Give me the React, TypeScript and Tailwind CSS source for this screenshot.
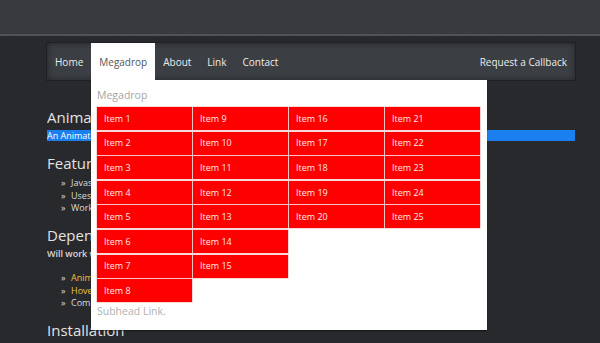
import React from "react";

const font = { fontFamily: '"Open Sans", "Noto Sans", sans-serif' };

const columns: string[][] = [
  ["Item 1", "Item 2", "Item 3", "Item 4", "Item 5", "Item 6", "Item 7", "Item 8"],
  ["Item 9", "Item 10", "Item 11", "Item 12", "Item 13", "Item 14", "Item 15"],
  ["Item 16", "Item 17", "Item 18", "Item 19", "Item 20"],
  ["Item 21", "Item 22", "Item 23", "Item 24", "Item 25"],
];

function Bullet({ text, yellow }: { text: string; yellow?: boolean }) {
  return (
    <div className="flex h-[12.5px] w-[44px] items-center overflow-hidden whitespace-nowrap pl-[14px] text-[9px] leading-[12.5px]">
      <span className="w-[10px] shrink-0 text-[#dcdcdc]">»</span>
      <span className={yellow ? "text-[#e9c23f]" : "text-[#dcdcdc]"}>{text}</span>
    </div>
  );
}

function Heading({ text, wide }: { text: string; wide?: boolean }) {
  return (
    <div
      className={
        (wide ? "w-[90px] " : "w-[44px] ") +
        "h-[20px] overflow-hidden whitespace-nowrap text-[15px] leading-[20px]"
      }
    >
      {text}
    </div>
  );
}

export default function App() {
  return (
    <div style={font} className="h-[343px] w-[600px] overflow-hidden bg-[#28292c]">
      <div className="h-[34px] bg-[repeating-linear-gradient(45deg,#3a3c40_0px,#3a3c40_1px,#37393d_1px,#37393d_3px)]" />
      <div className="h-[2px] bg-[#4f5256]" />
      <div className="ml-[47px] w-[528px] pt-[7px]">
        <div className="relative">
          <nav className="flex h-[37px] items-stretch bg-[#3b3e43] text-[10px] text-[#ececec] shadow-[inset_0_0_6px_rgba(0,0,0,0.45),0_0_0_1px_#1e2023]">
            <a className="flex items-center px-[8px] pt-[1px]">Home</a>
            <a className="flex items-center bg-white px-[8px] pt-[1px] text-[#555]">Megadrop</a>
            <a className="flex items-center px-[8px] pt-[1px]">About</a>
            <a className="flex items-center px-[8px] pt-[1px]">Link</a>
            <a className="flex items-center px-[8px] pt-[1px]">Contact</a>
            <a className="ml-auto flex items-center px-[8px] pt-[1px]">Request a Callback</a>
          </nav>

          <div className="absolute left-[44px] top-[37px] z-10 flex h-[250px] w-[396px] flex-col bg-white px-[6px] shadow-[0_1px_1px_rgba(0,0,0,0.4)]">
            <div className="mt-[8px] h-[14px] text-[10.5px] leading-[14px] text-[#a5a5a5]">Megadrop</div>
            <div className="mt-[5px] flex gap-x-[1px]">
              {columns.map((col, ci) => (
                <div key={ci} className="flex w-[95px] flex-col gap-y-[1.6px]">
                  {col.map((it) => (
                    <div
                      key={it}
                      className="flex h-[23px] items-center bg-[#ff0000] pl-[7px] text-[9px] text-[#fbeaea] shadow-[0_0_0_0.5px_#f6b0b0]"
                    >
                      {it}
                    </div>
                  ))}
                </div>
              ))}
            </div>
            <div className="mt-[2px] h-[14px] text-[10.5px] leading-[14px] text-[#b0b0b0]">Subhead Link.</div>
          </div>
        </div>

        <div className="mt-[27px] text-[#e2e2e2]">
          <Heading text="Animated Drop Down Menu" />
          <div className="mt-[3px] flex h-[11px] items-center bg-[#1c7fef]">
            <div className="w-[44px] overflow-hidden whitespace-nowrap text-[9px] leading-[11px] text-white">
              An Animated Mega Drop Down Menu
            </div>
          </div>
          <div className="mt-[12px]">
            <Heading text="Features" />
          </div>
          <div className="mt-[4px]">
            <Bullet text="Javascript free" />
            <Bullet text="Uses CSS3 transitions" />
            <Bullet text="Works in all modern browsers" />
          </div>
          <div className="mt-[10.5px]">
            <Heading text="Dependencies" />
          </div>
          <div className="mt-[3px] h-[12px] w-[44px] overflow-hidden whitespace-nowrap text-[9px] font-semibold leading-[12px] text-[#d8d8d8]">
            Will work without any dependencies
          </div>
          <div className="mt-[12px]">
            <Bullet text="Animate.css" yellow />
            <Bullet text="Hover.css" yellow />
            <Bullet text="Compass" />
          </div>
          <div className="mt-[10px]">
            <Heading text="Installation" wide />
          </div>
        </div>
      </div>
    </div>
  );
}
